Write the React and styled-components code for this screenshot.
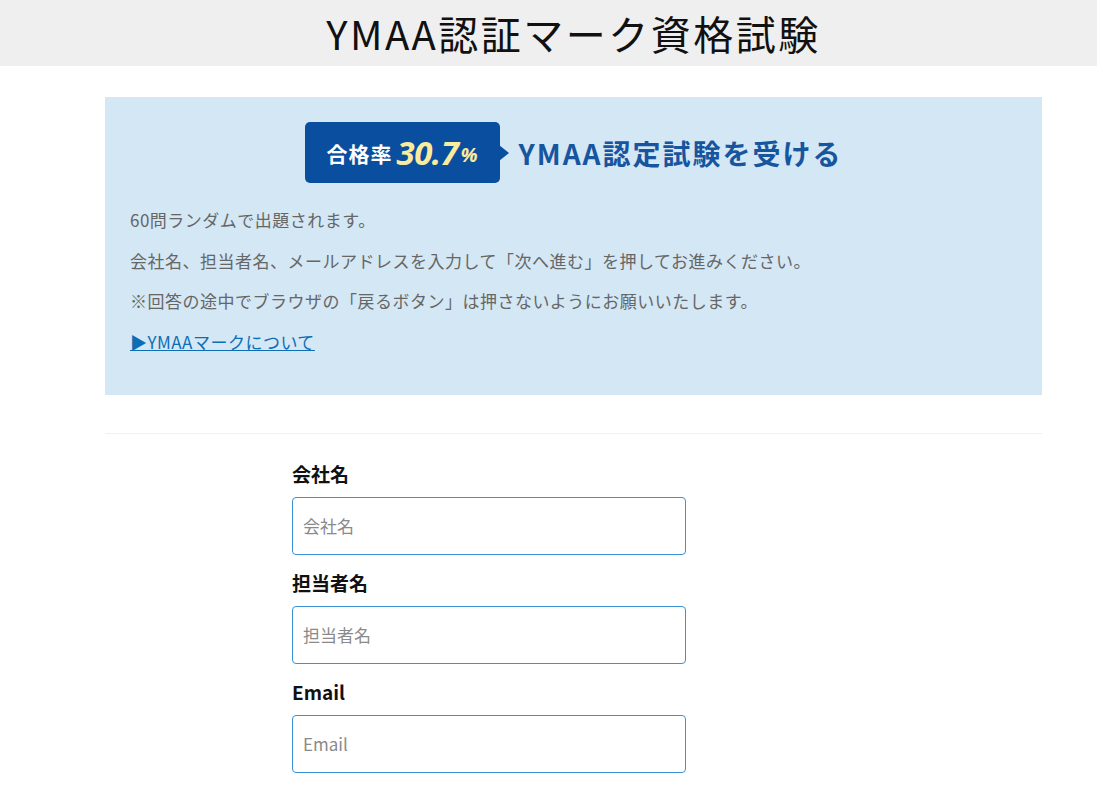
import React from "react";
import styled, { createGlobalStyle } from "styled-components";

const GlobalStyle = createGlobalStyle`
  html, body {
    margin: 0;
    padding: 0;
    background: #fff;
    font-family: "Noto Sans CJK JP", "Noto Sans", sans-serif;
  }
`;

const Header = styled.header`
  background: #efefef;
  height: 66px;
  display: flex;
  align-items: center;
`;

const Wrap = styled.div`
  width: 937px;
  margin-left: 105px;
`;

const Title = styled.h1`
  margin: 0;
  text-align: center;
  font-size: 40px;
  font-weight: 400;
  letter-spacing: 2.5px;
  line-height: 66px;
  color: #111;
`;

const Panel = styled.section`
  margin-top: 31px;
  background: #d4e7f4;
  padding: 25px 25px 32px;
`;

const Headline = styled.div`
  display: flex;
  justify-content: center;
  align-items: center;
  margin-bottom: 17px;
`;

const Badge = styled.div`
  position: relative;
  height: 61px;
  width: 195px;
  box-sizing: border-box;
  background: #0a4ea0;
  border-radius: 5px;
  display: flex;
  align-items: center;
  justify-content: center;
  color: #fff;
  margin-right: 19px;

  &::after {
    content: "";
    position: absolute;
    right: -9px;
    top: 50%;
    transform: translateY(-50%);
    border-left: 10px solid #0a4ea0;
    border-top: 8px solid transparent;
    border-bottom: 8px solid transparent;
  }
`;

const BadgeLabel = styled.span`
  font-size: 21px;
  font-weight: 700;
  letter-spacing: 1px;
  margin-right: 4px;
`;

const Rate = styled.span`
  font-family: "Noto Sans", sans-serif;
  font-size: 33px;
  font-weight: 700;
  font-style: italic;
  color: #fbeb9c;
  letter-spacing: -0.5px;
`;

const Percent = styled.span`
  font-family: "Noto Sans", sans-serif;
  font-size: 20px;
  font-weight: 700;
  font-style: italic;
  color: #fbeb9c;
  margin-left: 2px;
  align-self: flex-end;
  margin-bottom: 15px;
`;

const Heading = styled.h2`
  margin: 0;
  font-size: 28px;
  font-weight: 700;
  letter-spacing: 2px;
  color: #17559e;
`;

const Note = styled.p`
  margin: 0;
  font-size: 17px;
  line-height: 40.7px;
  letter-spacing: 0.5px;
  color: #666;
`;

const Link = styled.a`
  font-size: 17px;
  line-height: 40.7px;
  letter-spacing: 0.5px;
  color: #0e6db4;
  text-decoration: underline;
`;

const Divider = styled.hr`
  border: none;
  border-top: 1px solid #f0f0f0;
  margin: 38px 0 0;
`;

const Form = styled.form`
  width: 394px;
  margin-left: 187px;
  padding-top: 28px;
`;

const Field = styled.div`
  margin-bottom: 16px;
`;

const Label = styled.label`
  display: block;
  font-size: 19px;
  font-weight: 700;
  line-height: 24px;
  color: #111;
  margin-bottom: 11px;
`;

const Input = styled.input`
  display: block;
  width: 100%;
  height: 58px;
  box-sizing: border-box;
  border: 1px solid #3a93d4;
  border-radius: 4px;
  padding: 0 10px;
  font-family: "Noto Sans CJK JP", "Noto Sans", sans-serif;
  font-size: 17px;
  outline: none;
  background: #fff;

  &::placeholder {
    color: #8a8a8a;
  }
`;

const fields = [
  { id: "company", label: "会社名", type: "text" },
  { id: "person", label: "担当者名", type: "text" },
  { id: "email", label: "Email", type: "email" },
];

export default function App() {
  return (
    <>
      <GlobalStyle />
      <Header>
        <Wrap>
          <Title>YMAA認証マーク資格試験</Title>
        </Wrap>
      </Header>
      <Wrap>
        <Panel>
          <Headline>
            <Badge>
              <BadgeLabel>合格率</BadgeLabel>
              <Rate>30.7</Rate>
              <Percent>%</Percent>
            </Badge>
            <Heading>YMAA認定試験を受ける</Heading>
          </Headline>
          <Note>60問ランダムで出題されます。</Note>
          <Note>会社名、担当者名、メールアドレスを入力して「次へ進む」を押してお進みください。</Note>
          <Note>※回答の途中でブラウザの「戻るボタン」は押さないようにお願いいたします。</Note>
          <Link href="#">▶YMAAマークについて</Link>
        </Panel>
        <Divider />
        <Form>
          {fields.map((f) => (
            <Field key={f.id}>
              <Label htmlFor={f.id}>{f.label}</Label>
              <Input id={f.id} type={f.type} placeholder={f.label} />
            </Field>
          ))}
        </Form>
      </Wrap>
    </>
  );
}
